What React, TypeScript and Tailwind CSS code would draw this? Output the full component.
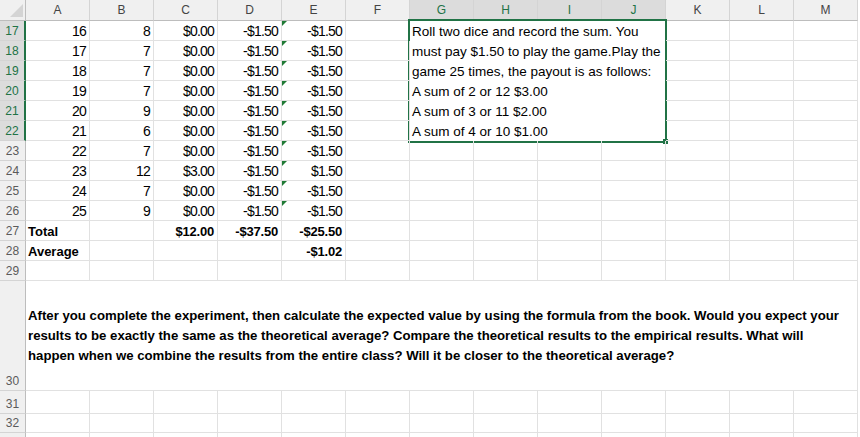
const COLS = ['A', 'B', 'C', 'D', 'E', 'F', 'G', 'H', 'I', 'J', 'K', 'L', 'M'];

type RowData = {
  a?: string;
  b?: string;
  c?: string;
  d?: string;
  e?: string;
  bold?: boolean;
  flag?: boolean;
};

const trials = [8, 7, 7, 7, 9, 6, 7, 12, 7, 9];

const buildRows = () => {
  const rows: Record<number, RowData> = {};
  trials.forEach((sum, i) => {
    const win = sum === 12 || sum === 2;
    rows[17 + i] = {
      a: String(16 + i),
      b: String(sum),
      c: win ? '$3.00' : '$0.00',
      d: '-$1.50',
      e: win ? '$1.50' : '-$1.50',
      flag: true,
    };
  });
  rows[27] = { a: 'Total', c: '$12.00', d: '-$37.50', e: '-$25.50', bold: true };
  rows[28] = { a: 'Average', e: '-$1.02', bold: true };
  return rows;
};

const ROWS = buildRows();
const ROW_NUMS = [17, 18, 19, 20, 21, 22, 23, 24, 25, 26, 27, 28, 29, 30, 31, 32, 33];

const isSelRow = (n: number) => n >= 17 && n <= 22;
const isSelCol = (i: number) => i >= 6 && i <= 9;

const sans = "font-['Liberation_Sans','Arial',sans-serif] text-black";

const RowHeader = ({ n }: { n: number }) => (
  <div
    className={`flex items-end justify-center border-b border-[#d4d4d4] pb-[3px] font-['Liberation_Sans',sans-serif] text-[12px] leading-none ${
      isSelRow(n)
        ? 'bg-[#dcdcdc] text-[#217346] border-r-2 border-r-[#217346]'
        : 'bg-[#f0f0f0] text-[#5b5b5b] border-r border-r-[#bdbdbd]'
    }`}
  >
    {n < 33 ? n : null}
  </div>
);

const Cell = ({ value, bold, left, flag }: { value?: string; bold?: boolean; left?: boolean; flag?: boolean }) => (
  <div
    className={`relative flex items-end overflow-visible whitespace-nowrap border-r border-b border-[#e1e1e1] pb-[2px] leading-none ${sans} ${
      left ? 'justify-start pl-[2px]' : 'justify-end pr-[3px]'
    } ${
      bold
        ? left
          ? 'text-[13px] font-bold'
          : 'text-[13px] font-bold tracking-[-0.2px]'
        : 'text-[14px] tracking-[-0.8px]'
    }`}
  >
    {flag && (
      <span className="absolute left-0 top-0 h-0 w-0 border-t-[5px] border-r-[5px] border-t-[#1f7a35] border-r-transparent" />
    )}
    {value}
  </div>
);

const NoteBox = () => (
  <div className={`relative col-span-4 row-span-6 whitespace-nowrap pl-[2px] pt-px text-[13.5px] leading-[20px] ${sans}`}>
    <div>Roll two dice and record the sum. You</div>
    <div>must pay $1.50 to play the game.Play the</div>
    <div>game 25 times, the payout is as follows:</div>
    <div>A sum of 2 or 12 $3.00</div>
    <div>A sum of 3 or 11 $2.00</div>
    <div>A sum of 4 or 10 $1.00</div>
    <div className="pointer-events-none absolute -left-[2px] -top-[2px] -right-px -bottom-[2px] border-2 border-[#217346]" />
    <div className="absolute -right-[2px] -bottom-[3px] h-[5px] w-[5px] bg-[#217346]" />
  </div>
);

const Question = () => (
  <div
    className={`col-span-13 flex flex-col justify-center whitespace-nowrap border-r border-b border-[#e1e1e1] pl-[2px] text-[13.2px] font-bold leading-[20px] ${sans}`}
  >
    <div>
      After you complete the experiment, then calculate the expected value by using the formula from the book. Would you expect your
    </div>
    <div>results to be exactly the same as the theoretical average? Compare the theoretical results to the empirical results. What will</div>
    <div>happen when we combine the results from the entire class? Will it be closer to the theoretical average?</div>
  </div>
);

export default function App() {
  return (
    <div className="h-[437px] w-[860px] overflow-hidden bg-white">
      <div className="grid grid-cols-[26px_repeat(13,64px)] grid-rows-[21px_repeat(13,20px)_110px_23px_19px_20px]">
        {/* corner */}
        <div className="relative border-r border-b border-[#bdbdbd] bg-[#f0f0f0]">
          <svg className="absolute left-[10px] top-[4px]" width="14" height="13" viewBox="0 0 14 13">
            <polygon points="13,0 13,13 0,13" fill="#d4d4d4" />
          </svg>
        </div>
        {COLS.map((c, i) => (
          <div
            key={c}
            className={`flex items-center justify-center border-r border-r-[#d4d4d4] font-['Liberation_Sans',sans-serif] text-[12px] leading-none ${
              isSelCol(i)
                ? 'bg-[#dcdcdc] text-[#217346] border-b-2 border-b-[#217346]'
                : 'bg-[#f0f0f0] text-[#444] border-b border-b-[#bdbdbd]'
            }`}
          >
            {c}
          </div>
        ))}

        {ROW_NUMS.map((n) => {
          if (n === 30) {
            return [<RowHeader key="h30" n={30} />, <Question key="q30" />];
          }
          const r = ROWS[n] || {};
          const out = [<RowHeader key={`h${n}`} n={n} />];
          COLS.forEach((c, i) => {
            if (isSelRow(n) && isSelCol(i)) {
              if (n === 17 && i === 6) out.push(<NoteBox key="note" />);
              return;
            }
            let v: string | undefined;
            if (c === 'A') v = r.a;
            if (c === 'B') v = r.b;
            if (c === 'C') v = r.c;
            if (c === 'D') v = r.d;
            if (c === 'E') v = r.e;
            out.push(
              <Cell
                key={`${n}${c}`}
                value={v}
                bold={r.bold}
                left={c === 'A' && !!r.bold}
                flag={c === 'E' && r.flag}
              />
            );
          });
          return out;
        })}
      </div>
    </div>
  );
}
